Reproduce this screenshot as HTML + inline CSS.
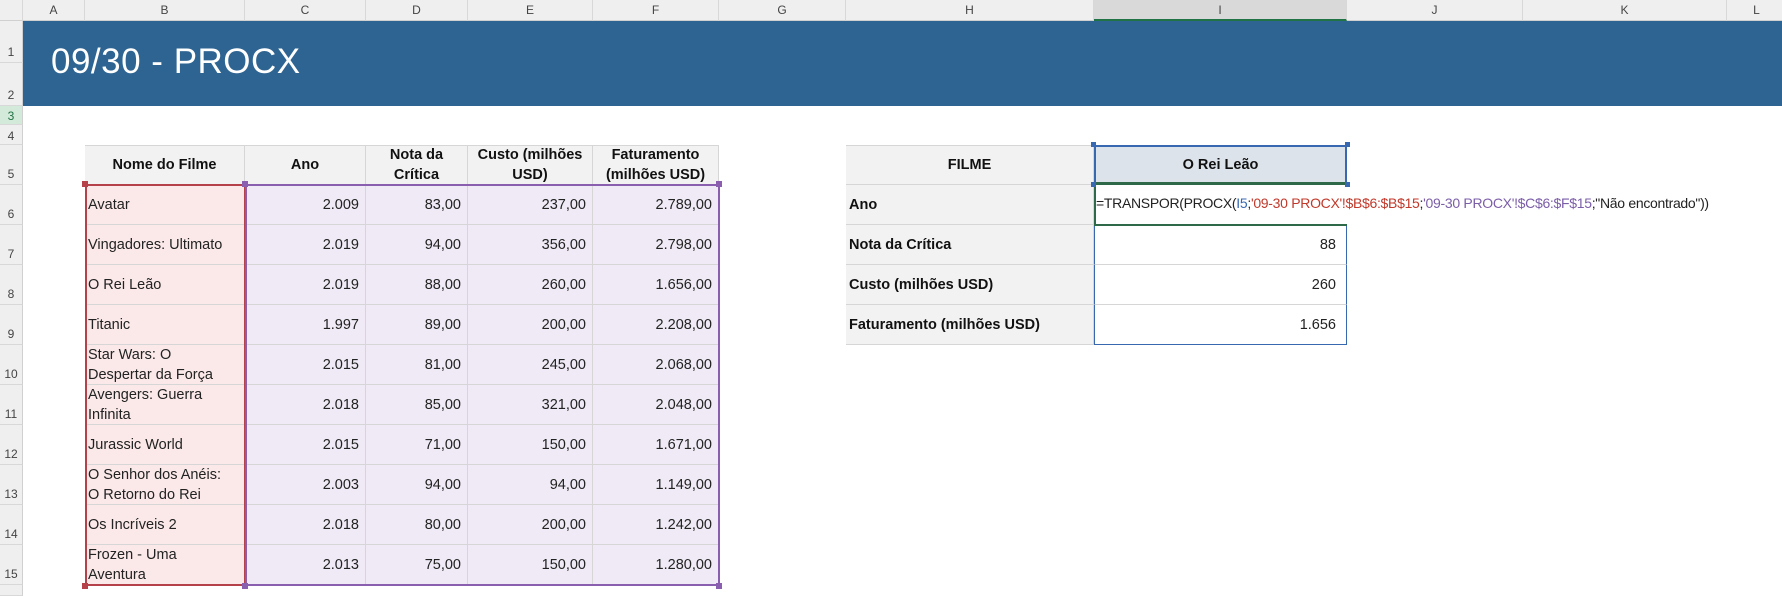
<!DOCTYPE html>
<html><head><meta charset="utf-8"><style>
*{margin:0;padding:0;box-sizing:border-box}
body{width:1782px;height:596px;overflow:hidden;background:#fff;font-family:"Liberation Sans","DejaVu Sans",sans-serif;position:relative}
.a{position:absolute}
.ch{position:absolute;top:0;height:21px;background:#efefef;border-right:1px solid #d8d8d8;border-bottom:1px solid #d0d0d0;font-size:12px;color:#444;text-align:center;line-height:21px}
.rh{position:absolute;left:0;width:23px;background:#efefef;border-bottom:1px solid #d8d8d8;border-right:1px solid #d0d0d0;font-size:12px;color:#444;text-align:center;display:flex;align-items:flex-end;justify-content:center;padding-bottom:3px}
.c{position:absolute;font-size:14.5px;color:#222;display:flex;align-items:center;border-right:1px solid #d6d6d6;border-bottom:1px solid #d6d6d6;line-height:20px}
.h{background:#f2f2f2;font-weight:bold;justify-content:center;text-align:center;color:#111}
.r{justify-content:flex-end;padding-right:6px;background:#efeaf5}
.n{background:#fbe9e9;padding-left:3px}
</style></head><body>
<div class="ch" style="left:0;width:23px"></div>
<div class="ch" style="left:23px;width:62px">A</div>
<div class="ch" style="left:85px;width:160px">B</div>
<div class="ch" style="left:245px;width:121px">C</div>
<div class="ch" style="left:366px;width:102px">D</div>
<div class="ch" style="left:468px;width:125px">E</div>
<div class="ch" style="left:593px;width:126px">F</div>
<div class="ch" style="left:719px;width:127px">G</div>
<div class="ch" style="left:846px;width:248px">H</div>
<div class="ch" style="left:1094px;width:253px;background:#d9d9d9;border-bottom:2px solid #217346">I</div>
<div class="ch" style="left:1347px;width:176px">J</div>
<div class="ch" style="left:1523px;width:204px">K</div>
<div class="ch" style="left:1727px;width:60px">L</div>

<div class="rh" style="top:21px;height:42px">1</div>
<div class="rh" style="top:63px;height:43px">2</div>
<div class="rh" style="top:106px;height:19px;background:#d3e9d9;color:#217346;padding-bottom:1px">3</div>
<div class="rh" style="top:125px;height:20px;padding-bottom:1px">4</div>
<div class="rh" style="top:145px;height:40px">5</div>
<div class="rh" style="top:185px;height:40px">6</div>
<div class="rh" style="top:225px;height:40px">7</div>
<div class="rh" style="top:265px;height:40px">8</div>
<div class="rh" style="top:305px;height:40px">9</div>
<div class="rh" style="top:345px;height:40px">10</div>
<div class="rh" style="top:385px;height:40px">11</div>
<div class="rh" style="top:425px;height:40px">12</div>
<div class="rh" style="top:465px;height:40px">13</div>
<div class="rh" style="top:505px;height:40px">14</div>
<div class="rh" style="top:545px;height:40px">15</div>
<div class="rh" style="top:585px;height:11px"></div>

<div class="a" style="left:23px;top:21px;width:1759px;height:85px;background:#2e6492"></div>
<div class="a" style="left:51px;top:42px;font-size:35px;color:#fff;letter-spacing:0.5px">09/30 - PROCX</div>

<!-- left table header -->
<div class="c h" style="left:85px;top:145px;width:160px;height:40px;border-top:1px solid #d6d6d6">Nome do Filme</div>
<div class="c h" style="left:245px;top:145px;width:121px;height:40px;border-top:1px solid #d6d6d6">Ano</div>
<div class="c h" style="left:366px;top:145px;width:102px;height:40px;border-top:1px solid #d6d6d6">Nota da<br>Crítica</div>
<div class="c h" style="left:468px;top:145px;width:125px;height:40px;border-top:1px solid #d6d6d6">Custo (milhões<br>USD)</div>
<div class="c h" style="left:593px;top:145px;width:126px;height:40px;border-top:1px solid #d6d6d6">Faturamento<br>(milhões USD)</div>

<div id="rows"></div>
<script>
var d=[["Avatar","2.009","83,00","237,00","2.789,00"],["Vingadores: Ultimato","2.019","94,00","356,00","2.798,00"],["O Rei Leão","2.019","88,00","260,00","1.656,00"],["Titanic","1.997","89,00","200,00","2.208,00"],["Star Wars: O<br>Despertar da Força","2.015","81,00","245,00","2.068,00"],["Avengers: Guerra<br>Infinita","2.018","85,00","321,00","2.048,00"],["Jurassic World","2.015","71,00","150,00","1.671,00"],["O Senhor dos Anéis:<br>O Retorno do Rei","2.003","94,00","94,00","1.149,00"],["Os Incríveis 2","2.018","80,00","200,00","1.242,00"],["Frozen - Uma<br>Aventura","2.013","75,00","150,00","1.280,00"]];
var xs=[85,245,366,468,593,719],h="";
d.forEach(function(r,i){var y=185+i*40;r.forEach(function(v,j){h+='<div class="c '+(j?'r':'n')+'" style="left:'+xs[j]+'px;top:'+y+'px;width:'+(xs[j+1]-xs[j])+'px;height:40px">'+(j?v:'<span>'+v+'</span>')+'</div>';});});
document.getElementById('rows').innerHTML=h;
</script>
<div class="a" style="left:85px;top:184px;width:161px;height:402px;border:2px solid #b5424a"></div>
<div class="a" style="left:245px;top:184px;width:475px;height:402px;border:2px solid #8a5fb0"></div>
<div class="a" style="left:82px;top:181px;width:6px;height:6px;background:#b5424a"></div>
<div class="a" style="left:82px;top:583px;width:6px;height:6px;background:#b5424a"></div>
<div class="a" style="left:242px;top:181px;width:6px;height:6px;background:#8a5fb0"></div>
<div class="a" style="left:242px;top:583px;width:6px;height:6px;background:#8a5fb0"></div>
<div class="a" style="left:716px;top:181px;width:6px;height:6px;background:#8a5fb0"></div>
<div class="a" style="left:716px;top:583px;width:6px;height:6px;background:#8a5fb0"></div>

<!-- right table -->
<div class="c h" style="left:846px;top:145px;width:248px;height:40px;border-top:1px solid #d6d6d6">FILME</div>
<div class="c h" style="left:1094px;top:145px;width:253px;height:40px;background:#dde3ea;border:2px solid #3868b0;border-bottom:3px solid #2e6a4a">O Rei Leão</div>
<div class="c h" style="left:846px;top:185px;width:248px;height:40px;justify-content:flex-start;padding-left:3px">Ano</div>
<div class="c h" style="left:846px;top:225px;width:248px;height:40px;justify-content:flex-start;padding-left:3px">Nota da Crítica</div>
<div class="c h" style="left:846px;top:265px;width:248px;height:40px;justify-content:flex-start;padding-left:3px">Custo (milhões USD)</div>
<div class="c h" style="left:846px;top:305px;width:248px;height:40px;justify-content:flex-start;padding-left:3px">Faturamento (milhões USD)</div>
<div class="c" style="left:1094px;top:225px;width:253px;height:40px;justify-content:flex-end;padding-right:10px;border-left:1px solid #3868b0;border-right:1px solid #3868b0">88</div>
<div class="c" style="left:1094px;top:265px;width:253px;height:40px;justify-content:flex-end;padding-right:10px;border-left:1px solid #3868b0;border-right:1px solid #3868b0">260</div>
<div class="c" style="left:1094px;top:305px;width:253px;height:40px;justify-content:flex-end;padding-right:10px;border-left:1px solid #3868b0;border-right:1px solid #3868b0;border-bottom:1px solid #3868b0">1.656</div>
<div class="a" style="left:1094px;top:185px;width:253px;height:41px;background:#fff;border:2px solid #2e6a4a;border-top:none;border-right:none"></div>
<div class="a" style="left:1096px;top:195px;font-size:14px;white-space:nowrap;color:#222;letter-spacing:-0.3px">=TRANSPOR(PROCX(<span style="color:#3868b0">I5</span>;<span style="color:#c0392b">'09-30 PROCX'!$B$6:$B$15</span>;<span style="color:#7b5ea8">'09-30 PROCX'!$C$6:$F$15</span>;"Não encontrado"))</div>
<div class="a" style="left:1091px;top:142px;width:5px;height:5px;background:#3868b0"></div>
<div class="a" style="left:1345px;top:142px;width:5px;height:5px;background:#3868b0"></div>
<div class="a" style="left:1091px;top:182px;width:5px;height:5px;background:#3868b0"></div>
<div class="a" style="left:1345px;top:182px;width:5px;height:5px;background:#3868b0"></div>
</body></html>
